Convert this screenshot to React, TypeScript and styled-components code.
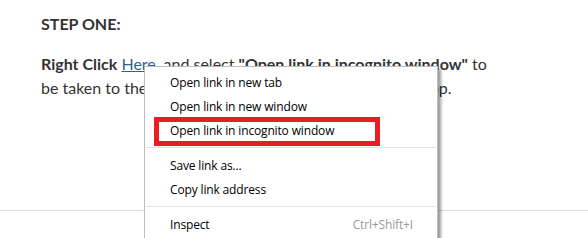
import React from "react";
import styled, { createGlobalStyle } from "styled-components";

const Global = createGlobalStyle`
  html, body { margin: 0; padding: 0; background: #fff; }
  body { width: 588px; height: 238px; overflow: hidden; position: relative; }
`;

const Page = styled.div`
  position: relative;
  width: 588px;
  height: 238px;
  font-family: Lato, "Liberation Sans", sans-serif;
  color: #333;
  font-size: 16px;
  line-height: 24px;
`;

const Content = styled.div`
  padding: 12px 0 0 41px;
  width: 460px;
`;

const Heading = styled.div`
  font-weight: 700;
  margin: 0 0 16px;
`;

const Para = styled.p`
  margin: 0;
`;

const Bold = styled.strong`
  font-weight: 700;
`;

const Link = styled.a`
  color: #2a6496;
  text-decoration: underline;
`;

const Rule = styled.hr`
  border: 0;
  border-top: 1px solid #dddddd;
  margin: 110px 0 0;
  width: 100%;
`;

const Menu = styled.div`
  position: absolute;
  left: 144px;
  top: 66px;
  width: 292px;
  background: #fff;
  border: 1px solid #bdbdbd;
  box-shadow: 3px 3px 3px rgba(0, 0, 0, 0.4);
  padding: 4px 0;
  font-family: "Open Sans", "Noto Sans", sans-serif;
  font-size: 12px;
  letter-spacing: -0.15px;
  color: #000;
  z-index: 2;
`;

const Item = styled.div`
  position: relative;
  height: 24px;
  display: flex;
  align-items: center;
  justify-content: space-between;
  padding: 0 24px 0 25px;
  white-space: nowrap;
`;

const Shortcut = styled.span`
  color: #9a9a9a;
`;

const Separator = styled.div`
  height: 1px;
  background: #e3e3e3;
  margin: 4px 1px 6px;
`;

const Highlight = styled.div`
  position: absolute;
  left: 9px;
  top: -2px;
  width: 216px;
  height: 19px;
  border: 5px solid #ed1c24;
  pointer-events: none;
`;

export default function App() {
  return (
    <Page>
      <Global />
      <Content>
        <Heading>STEP ONE:</Heading>
        <Para>
          <Bold>Right Click</Bold> <Link>Here</Link>, and select{" "}
          <Bold>"Open link in incognito window"</Bold> to be taken to the
          private version of the new Virtual Desktop.
        </Para>
      </Content>
      <Rule />
      <Menu>
        <Item>Open link in new tab</Item>
        <Item>Open link in new window</Item>
        <Item>
          Open link in incognito window
          <Highlight />
        </Item>
        <Separator />
        <Item>Save link as...</Item>
        <Item>Copy link address</Item>
        <Separator />
        <Item>
          Inspect<Shortcut>Ctrl+Shift+I</Shortcut>
        </Item>
      </Menu>
    </Page>
  );
}
